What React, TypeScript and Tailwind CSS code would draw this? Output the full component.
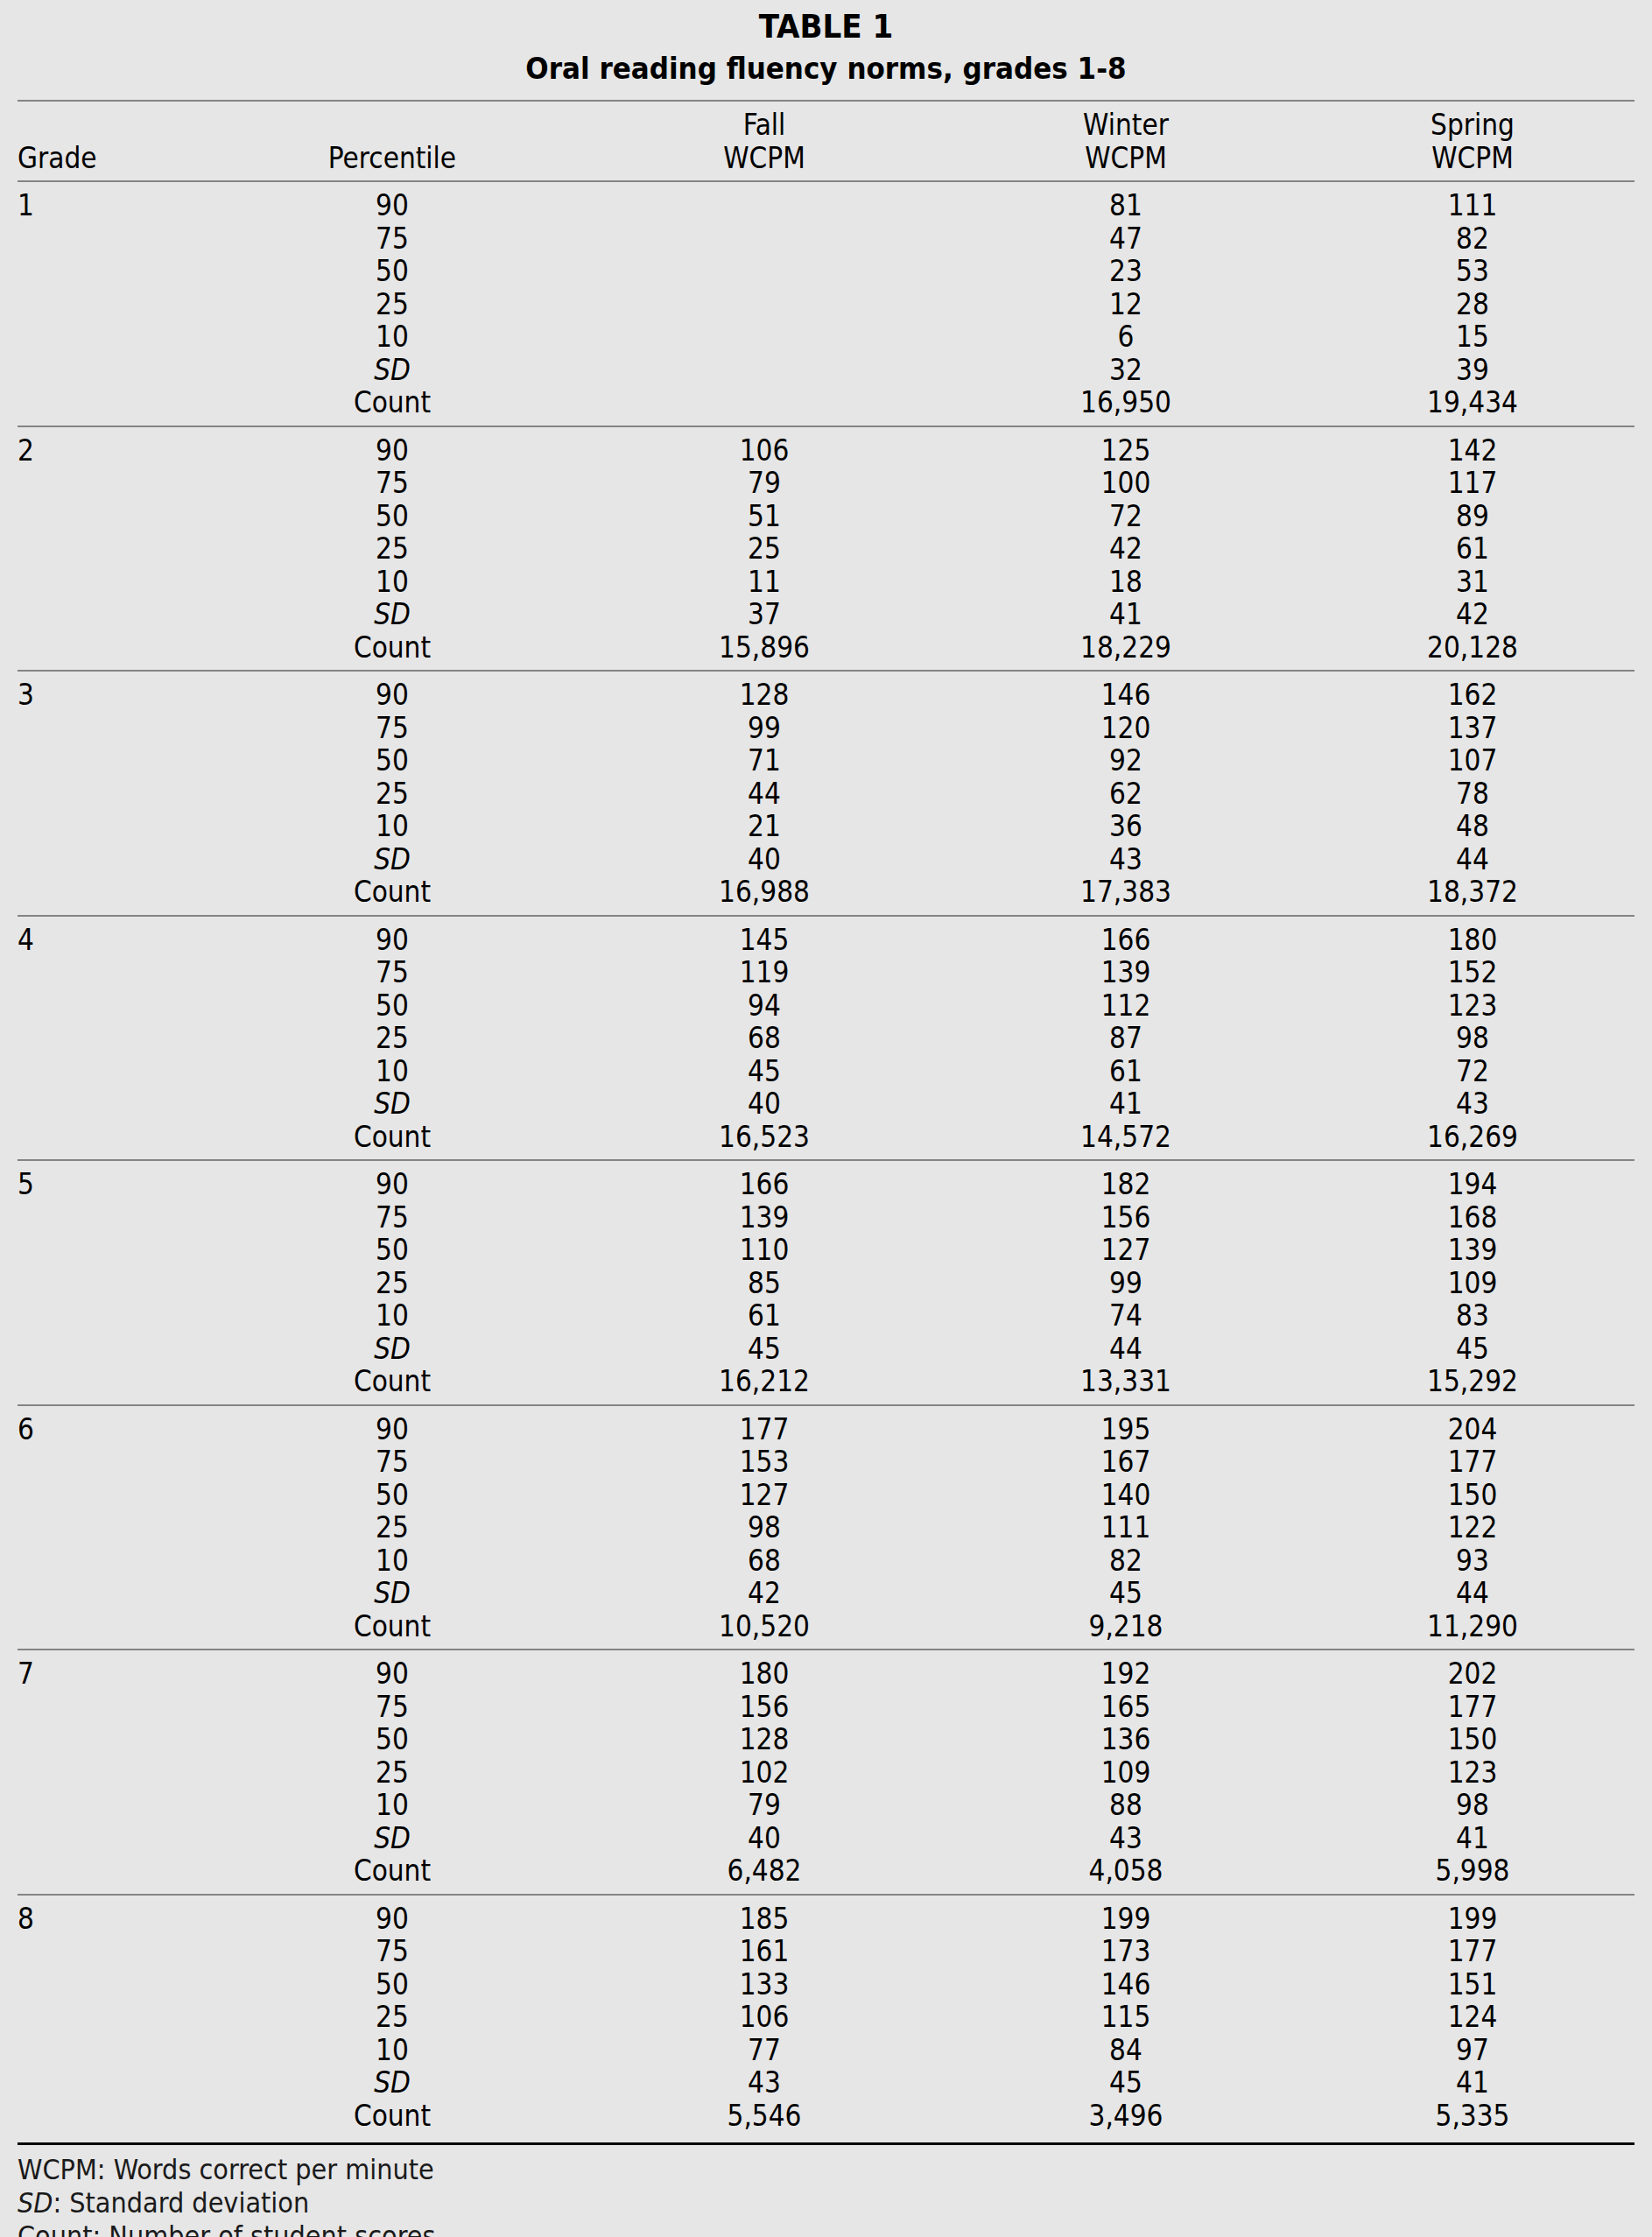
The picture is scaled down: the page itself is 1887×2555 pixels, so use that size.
const font = {
  fontFamily: '"Liberation Sans Narrow", "DejaVu Sans Condensed", "Liberation Sans", sans-serif',
};

type Group = {
  grade: string;
  fall: string[];
  winter: string[];
  spring: string[];
};

const percentiles = ["90", "75", "50", "25", "10", "SD", "Count"];

const groups: Group[] = [
  {
    grade: "1",
    fall: ["", "", "", "", "", "", ""],
    winter: ["81", "47", "23", "12", "6", "32", "16,950"],
    spring: ["111", "82", "53", "28", "15", "39", "19,434"],
  },
  {
    grade: "2",
    fall: ["106", "79", "51", "25", "11", "37", "15,896"],
    winter: ["125", "100", "72", "42", "18", "41", "18,229"],
    spring: ["142", "117", "89", "61", "31", "42", "20,128"],
  },
  {
    grade: "3",
    fall: ["128", "99", "71", "44", "21", "40", "16,988"],
    winter: ["146", "120", "92", "62", "36", "43", "17,383"],
    spring: ["162", "137", "107", "78", "48", "44", "18,372"],
  },
  {
    grade: "4",
    fall: ["145", "119", "94", "68", "45", "40", "16,523"],
    winter: ["166", "139", "112", "87", "61", "41", "14,572"],
    spring: ["180", "152", "123", "98", "72", "43", "16,269"],
  },
  {
    grade: "5",
    fall: ["166", "139", "110", "85", "61", "45", "16,212"],
    winter: ["182", "156", "127", "99", "74", "44", "13,331"],
    spring: ["194", "168", "139", "109", "83", "45", "15,292"],
  },
  {
    grade: "6",
    fall: ["177", "153", "127", "98", "68", "42", "10,520"],
    winter: ["195", "167", "140", "111", "82", "45", "9,218"],
    spring: ["204", "177", "150", "122", "93", "44", "11,290"],
  },
  {
    grade: "7",
    fall: ["180", "156", "128", "102", "79", "40", "6,482"],
    winter: ["192", "165", "136", "109", "88", "43", "4,058"],
    spring: ["202", "177", "150", "123", "98", "41", "5,998"],
  },
  {
    grade: "8",
    fall: ["185", "161", "133", "106", "77", "43", "5,546"],
    winter: ["199", "173", "146", "115", "84", "45", "3,496"],
    spring: ["199", "177", "151", "124", "97", "41", "5,335"],
  },
];

const Column = ({ values, className }: { values: string[]; className?: string }) => (
  <div className={"flex flex-col text-center " + (className ?? "")}>
    {values.map((v, i) => (
      <div key={i} className="h-[37.5px] leading-[37.5px]">
        {v}
      </div>
    ))}
  </div>
);

export default function App() {
  return (
    <div className="min-h-screen w-full bg-[#e6e6e6] px-[20px] text-black" style={font}>
      <div className="pt-[11px] pb-[17px] text-center font-bold">
        <div className="text-[38px] leading-[38px]">TABLE 1</div>
        <div className="mt-[10px] text-[34.5px] leading-[38px]">
          Oral reading fluency norms, grades 1-8
        </div>
      </div>

      <div className="h-[2px] bg-[#848484]" />

      <div className="grid grid-cols-[216px_424px_426px_400px_381px] pt-[8px] pb-[6px] text-[33px] leading-[38px]">
        <div className="flex flex-col justify-end">Grade</div>
        <div className="flex flex-col justify-end text-center">Percentile</div>
        <div className="text-center">
          <div>Fall</div>
          <div>WCPM</div>
        </div>
        <div className="text-center">
          <div>Winter</div>
          <div>WCPM</div>
        </div>
        <div className="pl-[11px] text-center">
          <div>Spring</div>
          <div>WCPM</div>
        </div>
      </div>

      {groups.map((g, gi) => (
        <div key={g.grade}>
          <div className="h-[2px] bg-[#848484]" />
          <div
            className={
              "grid grid-cols-[216px_424px_426px_400px_381px] pt-[8px] text-[33px] " +
              (gi === groups.length - 1 ? "pb-[12px]" : "pb-[7px]")
            }
          >
            <div className="h-[37.5px] leading-[37.5px]">{g.grade}</div>
            <div className="flex flex-col text-center">
              {percentiles.map((p) => (
                <div key={p} className={"h-[37.5px] leading-[37.5px] " + (p === "SD" ? "italic" : "")}>
                  {p}
                </div>
              ))}
            </div>
            <Column values={g.fall} />
            <Column values={g.winter} />
            <Column values={g.spring} className="pl-[11px]" />
          </div>
        </div>
      ))}

      <div className="h-[3px] bg-black" />

      <div className="pt-[9px] pb-[10px] text-[32px] leading-[38px] text-[#1a1a1a]">
        <div>WCPM: Words correct per minute</div>
        <div>
          <span className="italic">SD</span>: Standard deviation
        </div>
        <div>Count: Number of student scores</div>
      </div>
    </div>
  );
}
